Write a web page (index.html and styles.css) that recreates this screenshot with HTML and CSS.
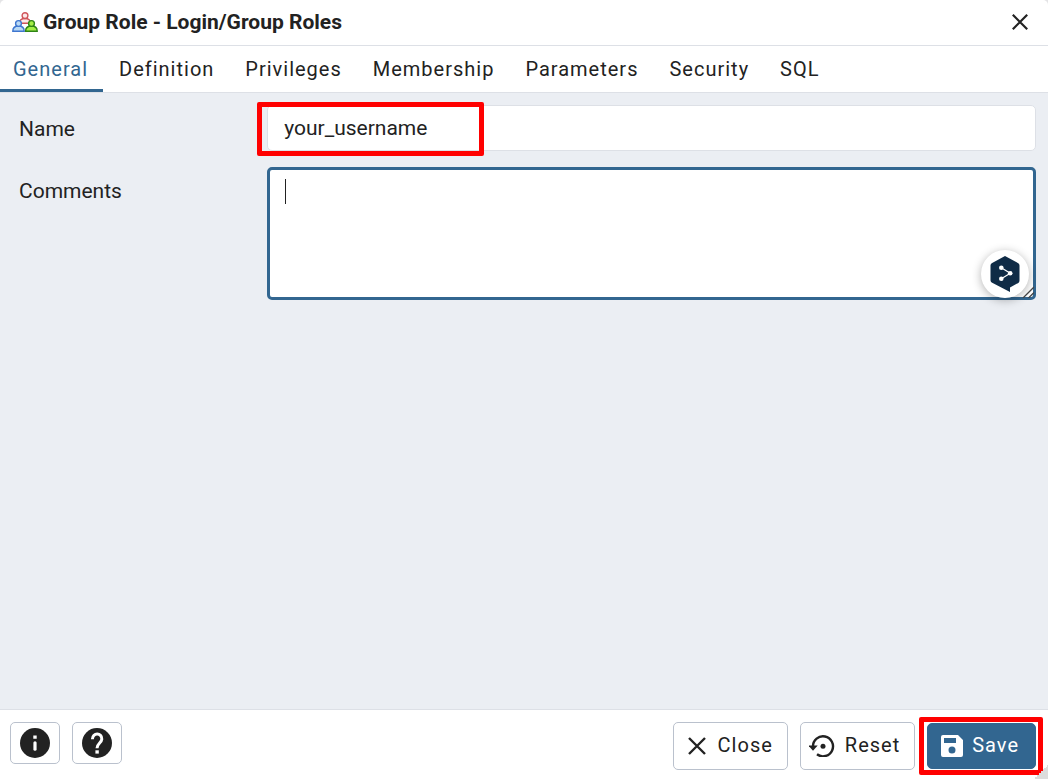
FILE: index.html
```html
<!DOCTYPE html>
<html lang="en">
  <head>
    <meta charset="UTF-8" />
    <meta name="viewport" content="width=device-width, initial-scale=1.0" />
    <title>Group Role - Login/Group Roles</title>
    <link rel="stylesheet" href="styles.css">
  </head>
  <body>
    <div class="dialog">
      <header class="dialog-header">
        <svg class="role-icon" viewBox="0 0 26 20" width="26" height="20" stroke-width="1.4">
          <g fill="#fbe9e9" stroke="#d0555a">
            <path d="M7.500 11.300c0-3.200 2-4.800 5.500-4.800s5.500 1.600 5.500 4.800z" />
            <circle cx="13" cy="3.600" r="2.900" />
          </g>
          <g fill="#b9d9f5" stroke="#3f76cf">
            <path d="M.800 19.200c0-4 2-5.200 5.700-5.200s5.700 1.200 5.700 5.200z" />
            <circle cx="6.500" cy="11.500" r="2.900" />
          </g>
          <g fill="#a4ee45" stroke="#2f8416">
            <path d="M13.600 19.200c0-4 2-5.200 5.900-5.200s5.700 1.200 5.700 5.200z" />
            <circle cx="19.500" cy="11.500" r="2.900" />
          </g>
        </svg>
        <h1>Group Role - Login/Group Roles</h1>
        <button class="close-icon" aria-label="Close dialog">
          <svg viewBox="0 0 16 16" width="16" height="16" fill="none" stroke="#222" stroke-width="2.200">
            <path d="M.800.800l14.400 14.400M15.200.800L.800 15.200" />
          </svg>
        </button>
      </header>

      <nav class="tabs">
        <button class="tab active">General</button>
        <button class="tab">Definition</button>
        <button class="tab">Privileges</button>
        <button class="tab">Membership</button>
        <button class="tab">Parameters</button>
        <button class="tab">Security</button>
        <button class="tab">SQL</button>
      </nav>

      <main class="form">
        <div class="form-row">
          <label for="name">Name</label>
          <div class="field">
            <input type="text" id="name" value="your_username" />
            <span class="highlight highlight-name"></span>
          </div>
        </div>
        <div class="form-row">
          <label for="comments">Comments</label>
          <div class="field">
            <textarea id="comments"></textarea>
            <span class="caret"></span>
            <svg class="grip" viewBox="0 0 12 12" width="12" height="12" stroke="#444" stroke-width="1.300">
              <path d="M1 12L12 1M6.500 12L12 6.500" />
            </svg>
            <span class="helper">
              <svg viewBox="0 0 30 36" width="30" height="36">
                <path fill="#0f2b46" d="M15 0l13.300 7.200q1.200.8 1.200 2.300v15q0 1.600-1.200 2.400L20 31.500V36L1.700 26.500Q.5 25.700.5 24.200V9.500Q.5 8 1.700 7.200z" />
                <path fill="none" stroke="#fff" stroke-width="1.200" d="M11.300 11.700l9 5.500-9 5.600" />
                <g fill="#fff">
                  <circle cx="11.300" cy="11.700" r="2.300" />
                  <circle cx="20.200" cy="17.200" r="2.300" />
                  <circle cx="11.300" cy="22.800" r="2.300" />
                </g>
              </svg>
            </span>
          </div>
        </div>
      </main>

      <footer class="dialog-footer">
        <button class="btn btn-icon" aria-label="SQL information">
          <svg viewBox="0 0 30 30" width="30" height="30">
            <circle cx="15" cy="15" r="15" fill="#222" />
            <path fill="#fff" d="M13.300 7.500h3.400v3.200h-3.400z" />
            <path stroke="#fff" stroke-width="3.200" stroke-linecap="round" d="M15 14.800v6.400" />
          </svg>
        </button>
        <button class="btn btn-icon" aria-label="Help">
          <svg viewBox="0 0 30 30" width="30" height="30">
            <circle cx="15" cy="15" r="15" fill="#222" />
            <path fill="none" stroke="#fff" stroke-width="3" d="M10.400 11.200c0-7 9.800-6.600 9.400 0-.2 3.600-4.800 4.200-4.800 9" />
            <path fill="#fff" d="M13.400 22.300h3.400v3.300h-3.400z" />
          </svg>
        </button>
        <div class="actions">
          <button class="btn">
            <svg viewBox="0 0 28 24" width="28" height="24" fill="none" stroke="#222" stroke-width="2.400">
              <path d="M7 5l16 16M23 5L7 21" />
            </svg>
            Close
          </button>
          <button class="btn">
            <svg viewBox="1 0 28 24" width="28" height="24">
              <path fill="none" stroke="#222" stroke-width="2.400" d="M5 13.500a10 10 0 1 1 4 7.800" />
              <path fill="#222" d="M.300 12.500h9.400L5 17.700z" />
              <circle cx="15" cy="13.200" r="2.500" fill="#222" />
            </svg>
            Reset
          </button>
          <div class="save-wrap">
            <button class="btn btn-primary">
              <svg viewBox="0 0 28 24" width="28" height="24">
                <path fill="#fff" fill-rule="evenodd" d="M7 2h15l5 5v15q0 2-2 2H7q-2 0-2-2V4q0-2 2-2zM8 5v5h12V5zM16 13.500a3.500 3.500 0 1 0 0 7 3.500 3.500 0 1 0 0-7z" />
              </svg>
              Save
            </button>
            <span class="highlight highlight-save"></span>
          </div>
        </div>
      </footer>
      <span class="resize-corner"></span>
    </div>
  </body>
</html>
```

FILE: styles.css
```css
* {
  box-sizing: border-box;
}

body {
  margin: 0;
  background-color: #e4e4e6;
  color: #222;
  font-family: Roboto, "Liberation Sans", sans-serif;
  font-size: 20px;
  line-height: 24px;
}

button,
input,
textarea {
  font: inherit;
  color: inherit;
}

svg {
  display: block;
  flex-shrink: 0;
}

.dialog {
  position: relative;
  display: flex;
  flex-direction: column;
  min-height: 100vh;
  background-color: #fff;
  border-radius: 5px 5px 0 0;
  overflow: hidden;
}

.dialog-header {
  display: flex;
  align-items: center;
  gap: 5px;
  height: 46px;
  padding: 0 20px 2px 12px;
  border-bottom: 1px solid #dde0e6;
}

.dialog-header h1 {
  margin: 0;
  font-size: 21px;
  font-weight: bold;
}

.close-icon {
  margin-left: auto;
  padding: 0;
  background: none;
  border: none;
  cursor: pointer;
}

.tabs {
  display: flex;
  height: 47px;
  border-bottom: 1px solid #dde0e6;
}

.tab {
  padding: 3px 15px 0;
  background: none;
  border: none;
  border-bottom: 3px solid transparent;
  letter-spacing: 1px;
  cursor: pointer;
}

.tab + .tab {
  padding-left: 16px;
}

.tab:first-child {
  padding-left: 13px;
}

.tab.active {
  color: #326690;
  border-bottom-color: #326690;
}

.form {
  flex: 1;
  display: flex;
  flex-direction: column;
  gap: 16px;
  padding: 12px 12px 12px 11px;
  background-color: #ebeef3;
  font-size: 21px;
}

.form-row {
  display: grid;
  grid-template-columns: 1fr 3fr;
}

.form-row label {
  padding: 12px 8px 10px;
}

.field {
  position: relative;
}

.field input,
.field textarea {
  display: block;
  width: 100%;
  background-color: #fff;
  border: 1px solid #dde0e6;
  border-radius: 5px;
  outline: none;
}

.field input {
  height: 46px;
  padding: 0 16px;
}

.field textarea {
  height: 133px;
  padding: 10px 14px;
  border: 3px solid #326690;
  resize: none;
}

.caret {
  position: absolute;
  top: 12px;
  left: 18px;
  width: 1px;
  height: 25px;
  background-color: #222;
}

.grip {
  position: absolute;
  right: 2px;
  bottom: 2px;
}

.helper {
  position: absolute;
  right: 7px;
  bottom: 2px;
  display: flex;
  align-items: center;
  justify-content: center;
  width: 48px;
  height: 48px;
  background-color: #fff;
  border-radius: 50%;
  box-shadow: 0 2px 10px rgba(0, 0, 0, 0.3);
}

.highlight {
  position: absolute;
  border: 5px solid #f00;
  border-radius: 2px;
  pointer-events: none;
}

.highlight-name {
  top: -3px;
  left: -10px;
  width: 227px;
  height: 54px;
}

.highlight-save {
  inset: -6px -7px -6px -8px;
}

.dialog-footer {
  display: flex;
  align-items: flex-start;
  gap: 12px;
  padding: 12px 12px 9px 10px;
  border-top: 1px solid #dde0e6;
}

.btn {
  display: flex;
  align-items: center;
  gap: 8px;
  height: 48px;
  padding: 0 14px 2px 8px;
  background-color: #fff;
  border: 1px solid #bac1cd;
  border-radius: 5px;
  letter-spacing: 1px;
  cursor: pointer;
}

.btn-icon {
  justify-content: center;
  width: 50px;
  height: 42px;
  padding: 0;
}

.btn-primary {
  height: 46px;
  padding-right: 16px;
  background-color: #326690;
  border-color: #326690;
  color: #fff;
}

.actions {
  display: flex;
  align-items: center;
  gap: 12px;
  margin-left: auto;
}

.save-wrap {
  position: relative;
}

.resize-corner {
  position: absolute;
  right: 0;
  bottom: 0;
  width: 14px;
  height: 14px;
  background: linear-gradient(135deg, transparent 50%, #dcdcdc 50%);
}
```
